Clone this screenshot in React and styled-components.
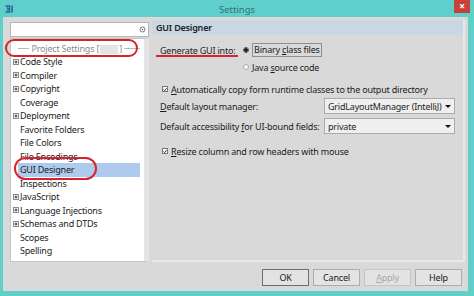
import React from 'react';
import styled, { createGlobalStyle } from 'styled-components';

const Global = createGlobalStyle`
  html, body { margin: 0; padding: 0; }
  body { font-family: "Noto Sans", "Open Sans", sans-serif; }
  #root { width: 474px; height: 296px; }
`;

const Window = styled.div`
  position: relative;
  width: 474px;
  height: 296px;
  background: #5ecfcb;
  display: flex;
  flex-direction: column;
  overflow: hidden;
  font-size: 9px;
  letter-spacing: -0.2px;
  color: #1c1c1c;
`;

const TitleBar = styled.div`
  flex: none;
  height: 17px;
  display: grid;
  grid-template-columns: 1fr auto 1fr;
  align-items: center;
`;

const TitleText = styled.div`
  color: #3b6f70;
  font-size: 9.5px;
  letter-spacing: 0;
  padding-top: 1px;
`;

const TitleLeft = styled.div`
  padding-left: 5px;
  display: flex;
  align-items: center;
`;

const TitleRight = styled.div`
  display: flex;
  justify-content: flex-end;
  align-self: start;
  padding-right: 4px;
`;

const CloseBtn = styled.div`
  width: 16px;
  height: 13px;
  background: #c8403c;
  color: #fff;
  font-size: 10px;
  line-height: 13px;
  text-align: center;
  font-weight: bold;
`;

const Body = styled.div`
  flex: 1;
  min-height: 0;
  overflow: hidden;
  margin: 0 6px 5px 3px;
  background: #d9d9d9;
  display: flex;
  flex-direction: column;
  padding: 3px 3px 5px 7px;
`;

const Main = styled.div`
  flex: 1;
  display: flex;
  gap: 3px;
  min-height: 0;
`;

const LeftCol = styled.div`
  width: 139px;
  display: flex;
  flex-direction: column;
  padding-top: 2px;
  min-height: 0;
`;

const Search = styled.div`
  flex: none;
  height: 15px;
  box-sizing: border-box;
  background: #fff;
  border: 1px solid #b5b5b5;
  display: flex;
  justify-content: flex-end;
  align-items: center;
  padding-right: 2px;
`;

const Tree = styled.div`
  margin-top: 1px;
  flex: 1;
  min-height: 0;
  background: #fff;
  border: 1px solid #c4c4c4;
  border-right: 5px solid #e4e4e4;
  overflow: hidden;
  padding-top: 2px;
`;

const Row = styled.div`
  height: 13.5px;
  display: flex;
  align-items: center;
  padding-left: 2px;
  white-space: nowrap;
`;

const ExpSlot = styled.div`
  width: 7px;
  display: flex;
  align-items: center;
`;

const Label = styled.span`
  display: inline-block;
  width: 120px;
  height: 13.5px;
  line-height: 13.5px;
  padding-left: 2px;
  margin-left: -2px;
  background: ${p => (p.$selected ? '#aecbee' : 'transparent')};
`;

const GroupHead = styled.div`
  height: 14px;
  display: flex;
  align-items: center;
  gap: 2px;
  padding: 0 4px 0 7px;
  color: #8c8c8c;
  white-space: nowrap;
`;

const Rule = styled.div`
  height: 1px;
  background: #b9b9b9;
  flex: ${p => p.$grow || 1};
`;

const Blur = styled.span`
  display: inline-block;
  width: 18px;
  height: 9px;
  background: #e4e4e4;
  vertical-align: middle;
  margin: 0 1px;
`;

const RightPanel = styled.div`
  flex: 1;
  border: 1px solid #e9e9e9;
  border-width: 0 2px 2px 0;
  display: flex;
  flex-direction: column;
`;

const Header = styled.div`
  height: 15px;
  background: #c9d6e4;
  display: flex;
  align-items: center;
  padding-left: 4px;
  font-weight: 600;
  color: #222;
`;

const Form = styled.div`
  display: flex;
  flex-direction: column;
  padding-left: 8px;
`;

const GenGrid = styled.div`
  margin-top: 8px;
  display: grid;
  grid-template-columns: 83px auto;
  row-gap: 3px;
  align-items: center;
`;

const OptRow = styled.div`
  height: 14px;
  display: flex;
  align-items: center;
  gap: 3px;
  margin-top: ${p => p.$mt || 0}px;
  padding-left: ${p => p.$pl || 0}px;
`;

const Focus = styled.span`
  border: 1px solid #8f8f8f;
  padding: 0 1px;
  line-height: 12px;
`;

const RadioDot = styled.span`
  width: 6px;
  height: 6px;
  box-sizing: border-box;
  border-radius: 50%;
  border: 1px solid ${p => (p.$on ? '#555' : '#a9a9a9')};
  background: ${p => (p.$on ? 'radial-gradient(circle, #222 0 1.6px, #fff 2px)' : '#fff')};
  flex: none;
`;

const Check = styled.span`
  width: 6px;
  height: 6px;
  box-sizing: border-box;
  border: 1px solid #777;
  background: #fff;
  flex: none;
  display: flex;
  align-items: center;
  justify-content: center;
`;

const ComboGrid = styled.div`
  display: grid;
  grid-template-columns: 164px 131px;
  row-gap: 4px;
  align-items: center;
  margin-top: 2px;
`;

const Combo = styled.div`
  height: 16px;
  box-sizing: border-box;
  border: 1px solid #ababab;
  background: #efefef;
  display: flex;
  align-items: center;
  justify-content: space-between;
  padding: 0 3px 0 3px;
`;

const Tri = styled.span`
  width: 0;
  height: 0;
  border-left: 3px solid transparent;
  border-right: 3px solid transparent;
  border-top: 3px solid #111;
`;

const ButtonRow = styled.div`
  flex: none;
  display: flex;
  justify-content: flex-end;
  gap: 4px;
  margin-top: 7px;
  padding-right: 3px;
`;

const Btn = styled.div`
  width: 47px;
  height: 17px;
  box-sizing: border-box;
  border: 1px solid ${p => (p.$default ? '#6f6f6f' : p.$disabled ? '#c4c4c4' : '#adadad')};
  background: #e3e3e3;
  color: ${p => (p.$disabled ? '#a8a8a8' : '#1c1c1c')};
  display: flex;
  align-items: center;
  justify-content: center;
`;

const Ellipse = styled.div`
  position: absolute;
  left: ${p => p.$x}px;
  top: ${p => p.$y}px;
  width: ${p => p.$w}px;
  height: ${p => p.$h}px;
  box-sizing: border-box;
  border: 2px solid #d8232f;
  border-radius: ${p => p.$h / 2}px / ${p => p.$h / 2}px;
  pointer-events: none;
`;

const RedLine = styled.div`
  position: absolute;
  left: 156px;
  top: 55px;
  width: 82px;
  height: 2px;
  background: #d8232f;
`;

const Plus = () => (
  <svg width="6" height="6" viewBox="0 0 6 6">
    <rect x="0.5" y="0.5" width="5" height="5" fill="#fff" stroke="#8a8a8a" />
    <path d="M1.5 3H4.5M3 1.5V4.5" stroke="#333" strokeWidth="1" />
  </svg>
);

const Logo = () => (
  <svg width="9" height="8" viewBox="0 0 9 8">
    <path d="M0.5 1H4.5V7H0.5" fill="none" stroke="#2d5f9a" strokeWidth="1.4" />
    <path d="M2 2.5L3.5 4L2 5.5" fill="none" stroke="#2d5f9a" strokeWidth="1.2" />
    <path d="M7 0.5V7.5" stroke="#2d5f9a" strokeWidth="1.6" />
  </svg>
);

const SearchIcon = () => (
  <svg width="7" height="7" viewBox="0 0 7 7">
    <circle cx="3.5" cy="3.5" r="2.5" fill="none" stroke="#777" strokeWidth="1" />
    <circle cx="3.5" cy="3.5" r="0.8" fill="#777" />
  </svg>
);

const CheckMark = () => (
  <svg width="5" height="5" viewBox="0 0 5 5">
    <path d="M0.6 2.6L2 3.9L4.4 0.9" fill="none" stroke="#111" strokeWidth="1.1" />
  </svg>
);

const items = [
  { t: 'Code Style', e: true },
  { t: 'Compiler', e: true },
  { t: 'Copyright', e: true },
  { t: 'Coverage' },
  { t: 'Deployment', e: true },
  { t: 'Favorite Folders' },
  { t: 'File Colors' },
  { t: 'File Encodings' },
  { t: 'GUI Designer', s: true },
  { t: 'Inspections' },
  { t: 'JavaScript', e: true },
  { t: 'Language Injections', e: true },
  { t: 'Schemas and DTDs', e: true },
  { t: 'Scopes' },
  { t: 'Spelling' },
  { t: 'SQL Dialects' },
];

export default function App() {
  return (
    <>
      <Global />
      <Window>
        <TitleBar>
          <TitleLeft><Logo /></TitleLeft>
          <TitleText>Settings</TitleText>
          <TitleRight><CloseBtn>×</CloseBtn></TitleRight>
        </TitleBar>
        <Body>
          <Main>
            <LeftCol>
              <Search><SearchIcon /></Search>
              <Tree>
                <GroupHead>
                  <Rule />
                  <span>Project Settings [<Blur />]</span>
                  <Rule $grow={1.4} />
                </GroupHead>
                {items.map(it => (
                  <Row key={it.t}>
                    <ExpSlot>{it.e && <Plus />}</ExpSlot>
                    <Label $selected={it.s}>{it.t}</Label>
                  </Row>
                ))}
              </Tree>
            </LeftCol>
            <RightPanel>
              <Header>GUI Designer</Header>
              <Form>
                <GenGrid>
                  <span>Generate GUI into:</span>
                  <OptRow>
                    <RadioDot $on />
                    <Focus>Binary <u>c</u>lass files</Focus>
                  </OptRow>
                  <span />
                  <OptRow>
                    <RadioDot />
                    <span>Java <u>s</u>ource code</span>
                  </OptRow>
                </GenGrid>
                <OptRow $mt={8} $pl={2}>
                  <Check><CheckMark /></Check>
                  <span><u>A</u>utomatically copy form runtime classes to the output directory</span>
                </OptRow>
                <ComboGrid>
                  <span><u>D</u>efault layout manager:</span>
                  <Combo><span>GridLayoutManager (IntelliJ)</span><Tri /></Combo>
                  <span>Default accessibility <u>f</u>or UI-bound fields:</span>
                  <Combo><span>private</span><Tri /></Combo>
                </ComboGrid>
                <OptRow $mt={10} $pl={2}>
                  <Check><CheckMark /></Check>
                  <span><u>R</u>esize column and row headers with mouse</span>
                </OptRow>
              </Form>
            </RightPanel>
          </Main>
          <ButtonRow>
            <Btn $default>OK</Btn>
            <Btn>Cancel</Btn>
            <Btn $disabled><u>A</u>pply</Btn>
            <Btn>Help</Btn>
          </ButtonRow>
        </Body>
        <Ellipse $x={5} $y={39} $w={133} $h={18} />
        <Ellipse $x={14} $y={157} $w={83} $h={23} />
        <RedLine />
      </Window>
    </>
  );
}
